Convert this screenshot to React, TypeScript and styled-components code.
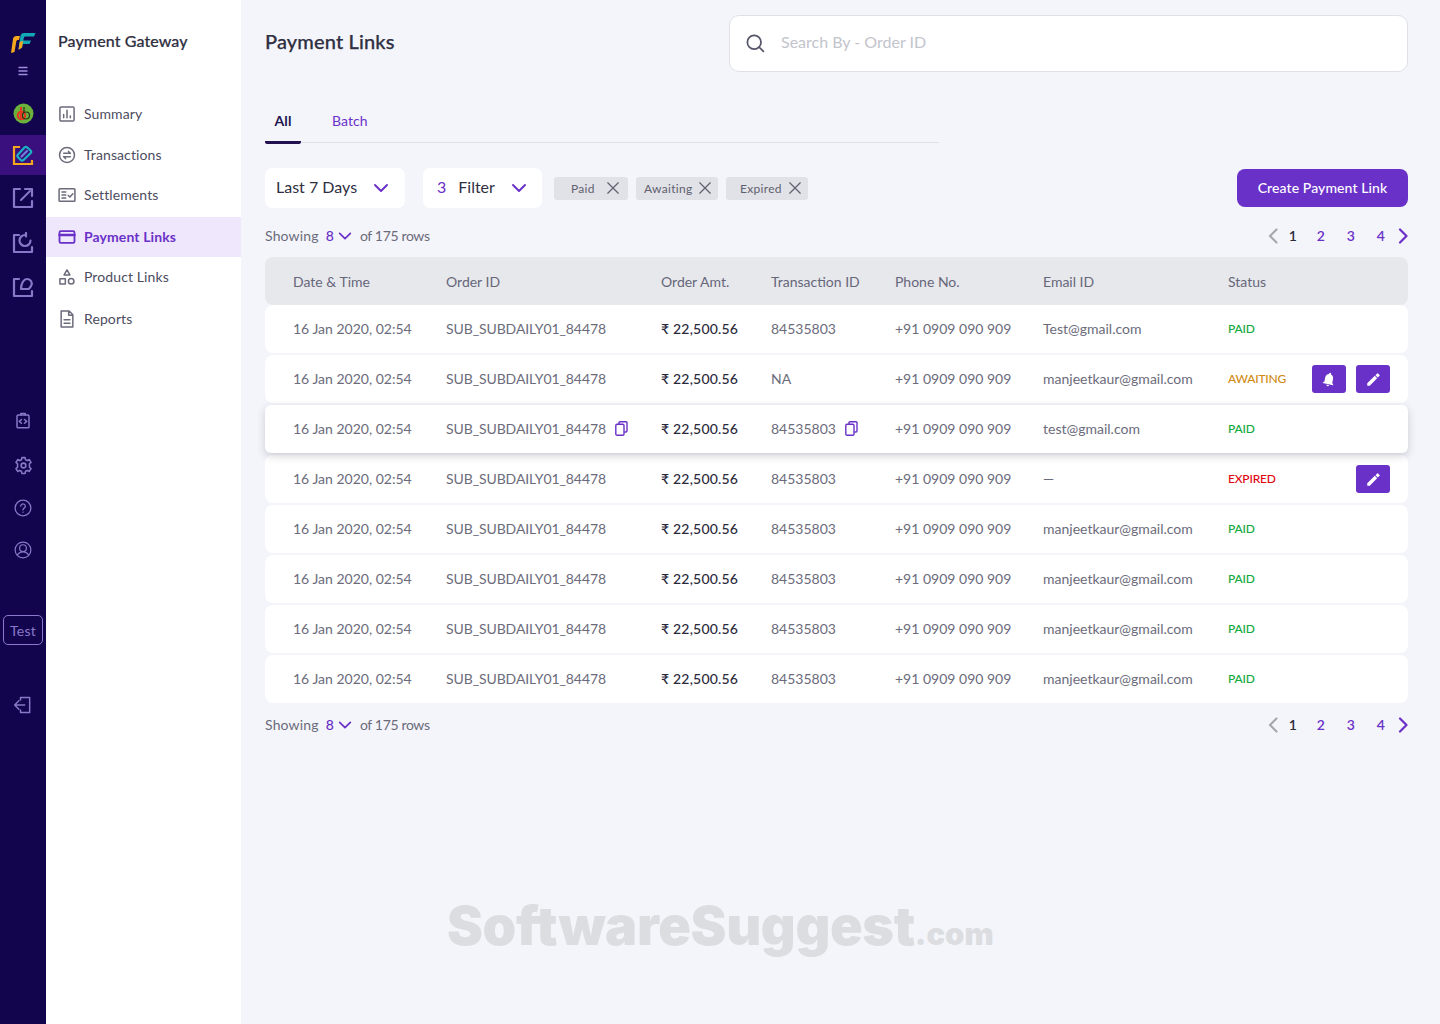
import React from "react";
import styled, { createGlobalStyle } from "styled-components";

const Global = createGlobalStyle`
  html, body { margin: 0; padding: 0; background: #f4f5fa; }
  body { font-family: "Lato", "Noto Sans", sans-serif; color: #2a2a3c; }
  * { box-sizing: border-box; }
`;

const Page = styled.div`display: flex; width: 1440px; height: 1024px; overflow: hidden; position: relative; background: #f4f5fa;`;
const Rail = styled.nav`width: 46px; flex: none; background: #12054d; display: flex; flex-direction: column; align-items: center;`;
const RailSlot = styled.div<{ $top?: number; $h?: number; $active?: boolean }>`
  width: 46px; height: ${p => p.$h ?? 44}px; margin-top: ${p => p.$top ?? 0}px; flex: none;
  display: flex; align-items: center; justify-content: center;
  background: ${p => (p.$active ? "#3a0f7e" : "transparent")};
`;
const TestBadge = styled.div`
  width: 40px; height: 30px; margin-top: 44px; border: 1px solid #8b78cc; border-radius: 5px;
  display: flex; align-items: center; justify-content: center; color: #8b78cc; font-size: 14px; letter-spacing: .2px;
`;
const Side = styled.aside`width: 195px; flex: none; background: #fff; padding-top: 30px;`;
const Brand = styled.div`font-size: 16px; font-weight: 500; padding-left: 12px; height: 22px; line-height: 22px; color: #2f2f42; letter-spacing: .1px; -webkit-text-stroke: .2px #2f2f42;`;
const SideList = styled.div`margin-top: 42px; display: flex; flex-direction: column;`;
const SideItem = styled.div<{ $active?: boolean; $top?: number }>`
  height: 40px; margin-top: ${p => p.$top ?? 0}px; display: flex; align-items: center; gap: 7px; padding-left: 11px;
  font-size: 14px; letter-spacing: .1px;
  background: ${p => (p.$active ? "#efe7fb" : "transparent")};
  color: ${p => (p.$active ? "#6a31c9" : "#4d4d5f")};
  font-weight: ${p => (p.$active ? 700 : 400)};
`;
const SideLabel = styled.span`padding-bottom: 2px;`;
const Main = styled.main`flex: 1; min-width: 0; padding: 14px 32px 0 24px; position: relative;`;
const Top = styled.header`display: flex; justify-content: space-between; align-items: center; height: 58px;`;
const Title = styled.h1`margin: 0 0 5px; font-size: 20px; line-height: 24px; font-weight: 500; color: #2f2f42; letter-spacing: .15px; -webkit-text-stroke: .25px #2f2f42;`;
const Search = styled.div`
  width: 679px; height: 57px; background: #fff; border: 1px solid #e0e1e7; border-radius: 10px;
  display: flex; align-items: center; padding-left: 15px; gap: 15px; color: #c3c4cc; font-size: 16px; letter-spacing: 0;
`;
const SearchHint = styled.span`margin-bottom: 3px;`;
const Tabs = styled.div`width: 674px; height: 58px; margin-top: 13px; border-bottom: 1px solid #dfe0e6; display: flex; align-items: flex-start;`;
const Tab = styled.div<{ $active?: boolean }>`
  width: ${p => (p.$active ? "36px" : "auto")}; margin-left: ${p => (p.$active ? 0 : 31)}px; height: 59px; padding-top: 26px; line-height: 20px; font-size: 14px; text-align: center; letter-spacing: .1px;
  color: ${p => (p.$active ? "#22164f" : "#6a31c9")}; font-weight: ${p => (p.$active ? 700 : 400)};
  border-bottom: ${p => (p.$active ? "3px solid #22104f" : "none")}; border-radius: 0 0 2px 2px;
`;
const Controls = styled.div`display: flex; align-items: center; height: 40px; margin-top: 25px;`;
const Select = styled.div<{ $w: number; $ml?: number }>`
  width: ${p => p.$w}px; height: 40px; margin-left: ${p => p.$ml ?? 0}px; background: #fff; border-radius: 7px; flex: none;
  display: flex; align-items: center; padding-left: 11px; font-size: 16px; color: #2f2f42; letter-spacing: 0;
`;
const SelectText = styled.span`padding-bottom: 3px;`;
const Purple = styled.span`color: #6a31c9;`;
const Count = styled(Purple)`margin: 0 12px 3px 3px;`;
const Chev = styled.span<{ $ml: number }>`margin-left: ${p => p.$ml}px; display: inline-flex;`;
const Tags = styled.div`display: flex; gap: 8px; margin-left: 12px;`;
const Tag = styled.div<{ $w: number; $pl: number; $pr: number }>`
  width: ${p => p.$w}px; height: 23px; background: #e1e2e7; border-radius: 3px; display: flex; align-items: center; justify-content: space-between;
  padding: 0 ${p => p.$pr}px 0 ${p => p.$pl}px;
  font-size: 12px; color: #5f5f6e; letter-spacing: .3px;
`;
const CreateBtn = styled.button`
  margin-left: auto; width: 171px; height: 38px; border: 0; padding: 0 0 2px; border-radius: 8px; background: #6a31c9; color: #fff;
  font: 500 14px "Lato", sans-serif; letter-spacing: .1px;
`;
const Meta = styled.div<{ $top: number }>`display: flex; align-items: center; height: 20px; margin-top: ${p => p.$top}px; font-size: 14px; color: #6b6b7b; letter-spacing: .15px;`;
const MetaNum = styled(Purple)`margin-left: 7px; margin-right: 3px; font-weight: 500;`;
const MetaChev = styled.span`display: inline-flex; margin-top: 2px;`;
const MetaAfter = styled.span`margin-left: 7px; letter-spacing: -.35px;`;
const Pager = styled.div`margin-left: auto; display: flex; align-items: center;`;
const PagerArrow = styled.span`display: inline-flex; margin-top: 2px;`;
const PageNum = styled.span<{ $cur?: boolean; $w?: number }>`
  width: ${p => p.$w ?? 30}px; text-align: center; font-size: 14px; font-weight: 600; color: ${p => (p.$cur ? "#2a2a3c" : "#6a31c9")};
`;
const Table = styled.div`margin-top: 12px; width: 1143px;`;
const Grid = styled.div`
  display: grid; grid-template-columns: 153px 215px 110px 124px 148px 185px 1fr; align-items: center; padding-left: 28px;
`;
const Head = styled(Grid)`height: 48px; background: #e6e8ec; border-radius: 8px; font-size: 14px; color: #66667a; letter-spacing: 0;`;
const Row = styled(Grid)<{ $lift?: boolean }>`
  height: 48px; margin-bottom: 2px; background: #fff; border-radius: ${p => (p.$lift ? 6 : 8)}px; font-size: 14px; color: #6b6b7b; letter-spacing: 0; position: relative;
  box-shadow: ${p => (p.$lift ? "0 3px 9px rgba(40,40,70,.2)" : "none")};
  z-index: ${p => (p.$lift ? 1 : 0)};
`;
const Cell = styled.div`display: flex; align-items: center; white-space: nowrap; padding-bottom: 2px;`;
const OrderCell = styled(Cell)`letter-spacing: -.1px;`;
const Amount = styled(Cell)`color: #2a2a3c; font-weight: 500; letter-spacing: .2px;`;
const CopyWrap = styled.span`display: inline-flex; margin-left: 9px;`;
const StatusCell = styled.div`display: flex; align-items: center; justify-content: space-between; padding-right: 18px; height: 32px; white-space: nowrap;`;
const Status = styled.span<{ $c: string }>`color: ${p => p.$c}; font-size: 12px; font-weight: 500; letter-spacing: -.2px; padding-bottom: 2px;`;
const Actions = styled.div`display: flex; gap: 10px; margin-left: auto;`;
const IconBtn = styled.div`width: 34px; height: 28px; border-radius: 3px; background: #6a31c9; display: flex; align-items: center; justify-content: center;`;
const Watermark = styled.div`
  position: absolute; left: 447px; top: 893px; color: #dcdde1; font: 900 54px/66px "Inter", sans-serif; letter-spacing: -.4px; white-space: nowrap;
`;
const WatermarkTld = styled.span`font-size: 31px; letter-spacing: 0;`;

type SP = { s?: number; c?: string };
const Line = ({ s = 20, c = "#75758a", children, w = 1.5, vb = 24 }: SP & { children: React.ReactNode; w?: number; vb?: number }) => (
  <svg width={s} height={s} viewBox={`0 0 ${vb} ${vb}`} fill="none" stroke={c} strokeWidth={w} strokeLinecap="round" strokeLinejoin="round">{children}</svg>
);
const Down = ({ s = 18, c = "#6a31c9", w = 2.6 }: SP & { w?: number }) => <Line s={s} c={c} w={w}><path d="M4 8l8 8 8-8" /></Line>;
const Close = () => <Line s={14} c="#5f5f6e" w={2}><path d="M3 3l18 18M21 3L3 21" /></Line>;
const Copy = () => (
  <svg width="13" height="15" viewBox="0 0 13 15" fill="none" stroke="#6a31c9" strokeWidth="1.4" strokeLinejoin="round">
    <rect x=".8" y="3.300" width="8.200" height="10.900" rx="1.200" />
    <path d="M4 3V1.800A1 1 0 0 1 5 .8h6a1 1 0 0 1 1 1V10a1 1 0 0 1-1 1H9.200" />
  </svg>
);
const Pencil = () => <svg width="15" height="15" viewBox="0 0 24 24" fill="#fff"><path d="M2 18v4h4L17.810 9.940l-3.750-3.750L2 18zM21.710 6.040a1 1 0 0 0 0-1.410l-2.340-2.340a1 1 0 0 0-1.410 0l-2.830 2.830 3.750 3.750 2.830-2.830z" /></svg>;
const Bell = () => <svg width="16" height="16" viewBox="0 0 24 24" fill="#fff"><g transform="rotate(12 12 12)"><path d="M12 23c1.100 0 2-.9 2-2h-4c0 1.100.9 2 2 2zm6-6v-6c0-3.070-1.630-5.640-4.500-6.320V4c0-.83-.67-1.500-1.500-1.500s-1.500.67-1.500 1.500v.68C7.640 5.360 6 7.920 6 11v6l-2 2v1h16v-1l-2-2z" /></g></svg>;

const RC = "#8878c8";
const Frame = ({ children }: { children: React.ReactNode }) => (
  <svg width="22" height="22" viewBox="0 0 22 22" fill="none" stroke={RC} strokeWidth="2.200" strokeLinecap="round" strokeLinejoin="round">
    {children}
  </svg>
);

const Logo = () => (
  <svg width="26" height="22" viewBox="0 0 26 22">
    <path d="M1 21 L3 7 Q3.500 4 6.500 4 H10 L9 8 H7.500 Q6.500 8 6.300 9.500 L4.500 20 Z" fill="#f5a81c" />
    <path d="M8.500 17 L10.500 4 Q11 1 14 1 H25.500 L24 4.500 H15 Q14 4.500 13.800 6 L13.400 8.500 H21 L19.500 12 H12.800 L12 16 Z" fill="#12a9b5" />
    <path d="M8.500 18 L9.700 10 L13 9 L12 15.500 Z" fill="#f5a81c" />
  </svg>
);

const rows = [
  { email: "Test@gmail.com", st: "PAID" },
  { email: "manjeetkaur@gmail.com", tx: "NA", st: "AWAITING", bell: true, edit: true },
  { email: "test@gmail.com", st: "PAID", lift: true },
  { email: "—", st: "EXPIRED", edit: true },
  { email: "manjeetkaur@gmail.com", st: "PAID" },
  { email: "manjeetkaur@gmail.com", st: "PAID" },
  { email: "manjeetkaur@gmail.com", st: "PAID" },
  { email: "manjeetkaur@gmail.com", st: "PAID" },
];
const colors: Record<string, string> = { PAID: "#12a83e", AWAITING: "#d08a12", EXPIRED: "#e0060f" };

const SI = ({ children }: { children: React.ReactNode }) => <Line s={20} c="#6b6b7b" w={1.8}>{children}</Line>;

const PagerLeft = () => (
  <svg width="12" height="16" viewBox="0 0 12 16" fill="none" stroke="#a7a7b0" strokeWidth="2.200" strokeLinecap="round" strokeLinejoin="round"><path d="M8.500 1.500L2 8l6.500 6.500" /></svg>
);
const PagerRight = () => (
  <svg width="12" height="16" viewBox="0 0 12 16" fill="none" stroke="#6a31c9" strokeWidth="2.200" strokeLinecap="round" strokeLinejoin="round"><path d="M4 1.500L10.500 8 4 14.500" /></svg>
);

const Pagination = () => (
  <Pager>
    <PagerArrow><PagerLeft /></PagerArrow>
    <PageNum $cur $w={26}>1</PageNum>
    <PageNum>2</PageNum>
    <PageNum>3</PageNum>
    <PageNum>4</PageNum>
    <PagerArrow><PagerRight /></PagerArrow>
  </Pager>
);
const Showing = ({ top }: { top: number }) => (
  <Meta $top={top}>
    Showing<MetaNum>8</MetaNum><MetaChev><Down s={16} /></MetaChev><MetaAfter>of 175 rows</MetaAfter>
    <Pagination />
  </Meta>
);

export default function App() {
  return (
    <Page>
      <Global />
      <Rail>
        <RailSlot $top={32} $h={22}><Logo /></RailSlot>
        <RailSlot $top={9} $h={16}>
          <Line s={12} c="#9d8be0" w={1.4} vb={12}><path d="M2 2.500h8M2 6h8M2 9.500h8" /></Line>
        </RailSlot>
        <RailSlot $top={23} $h={22}>
          <svg width="21" height="21" viewBox="0 0 21 21">
            <circle cx="10.500" cy="10.500" r="10" fill="#6ab23c" />
            <path d="M8 4v12" stroke="#e23a22" strokeWidth="2.200" />
            <circle cx="8.500" cy="12.500" r="3.700" fill="none" stroke="#e23a22" strokeWidth="2.200" />
            <circle cx="13" cy="12.500" r="3.500" fill="none" stroke="#27301a" strokeWidth="1.200" />
            <path d="M11 4v6" stroke="#27301a" strokeWidth="1.200" />
          </svg>
        </RailSlot>
        <RailSlot $top={11} $h={40} $active>
          <svg width="22" height="22" viewBox="0 0 22 22" fill="none" strokeLinecap="round" strokeLinejoin="round">
            <path d="M8 3H2v17h18v-4" stroke="#f5a81c" strokeWidth="2.200" strokeLinejoin="miter" strokeLinecap="butt" />
            <path d="M6 10.500L12.500 3.500a2 2 0 0 1 2.800 0l3.200 3a2 2 0 0 1 0 2.800L11.500 16a2 2 0 0 1-2.800 0L6 13.300a2 2 0 0 1 0-2.800z" stroke="#19b3c4" strokeWidth="2.200" />
            <path d="M9.500 12.500l5.500-5.500" stroke="#6f7fd8" strokeWidth="2.200" />
          </svg>
        </RailSlot>
        <RailSlot $top={1}>
          <Frame><path d="M8 2H2v18h18v-6" /><path d="M13 2h7v7" /><path d="M9 13l9-9" strokeWidth="2" /></Frame>
        </RailSlot>
        <RailSlot $top={1}>
          <Frame><path d="M7 3H2v17h18v-5" /><path d="M18.500 8.500a5.500 5.500 0 1 1-5.500-5.500" /><path d="M14 1v3.500" /></Frame>
        </RailSlot>
        <RailSlot>
          <Frame><path d="M7 3H2v17h18v-5" /><path d="M9 13c0-6 3-10 6-10a4.500 4.500 0 0 1 4 7c-1 2-1.500 3-3 3z" /></Frame>
        </RailSlot>
        <RailSlot $top={90}>
          <Line s={18} c={RC} w={2}><rect x="4" y="4" width="16" height="17" rx="1.500" /><path d="M9 4V2h6v2M10 10l-3 2.500 3 2.500M14 10l3 2.500-3 2.500" /></Line>
        </RailSlot>
        <RailSlot>
          <Line s={19} c={RC} w={2}><circle cx="12" cy="12" r="3" /><path d="M10 2h4l.6 2.800 2.200 1 2.500-1.300 2.200 3.500-2 1.800v4.400l2 1.800-2.200 3.500-2.500-1.300-2.200 1L14 22h-4l-.6-2.800-2.200-1-2.500 1.300-2.200-3.500 2-1.800V9.800l-2-1.800 2.200-3.500 2.500 1.300 2.200-1z" /></Line>
        </RailSlot>
        <RailSlot $h={42}>
          <Line s={18} c={RC} w={1.7}><circle cx="12" cy="12" r="10.500" /><path d="M9 9.500a3 3 0 1 1 4.500 2.600c-1 .6-1.500 1.200-1.500 2.400M12 17.500v.3" /></Line>
        </RailSlot>
        <RailSlot $h={42}>
          <Line s={18} c={RC} w={1.6}><circle cx="12" cy="12" r="10.500" /><circle cx="12" cy="9.500" r="4.500" /><path d="M4.500 19c1.500-3 4-4.500 7.500-4.500s6 1.500 7.500 4.500" /></Line>
        </RailSlot>
        <TestBadge>Test</TestBadge>
        <RailSlot $top={38} $h={44}>
          <Line s={20} c={RC} w={1.8}><path d="M9 6V3h11v18H9v-3M14 12H3M7 7l-5 5 5 5" /></Line>
        </RailSlot>
      </Rail>
      <Side>
        <Brand>Payment Gateway</Brand>
        <SideList>
          <SideItem>
            <SI><rect x="3.500" y="3.500" width="17" height="17" rx="1.500" /><path d="M8 16.500v-4M12 16.500v-9M16 16.500v-2" /></SI><SideLabel>Summary</SideLabel>
          </SideItem>
          <SideItem $top={1}>
            <SI><circle cx="12" cy="12" r="9" /><path d="M8 14h8M8 14l2.200 2.300M16 10H8M16 10l-2.200-2.300" /></SI><SideLabel>Transactions</SideLabel>
          </SideItem>
          <SideItem>
            <SI><rect x="2.500" y="4.500" width="19" height="15" rx="1" /><path d="M6 8.500h4.500M6 12h4.500M6 15.500h4.500M13.500 12.500l2 2 3.500-4" /></SI><SideLabel>Settlements</SideLabel>
          </SideItem>
          <SideItem $active $top={2}>
            <Line s={20} c="#6a31c9" w={2.2}><rect x="3" y="5" width="18" height="14" rx="1.500" /><path d="M3 9.500h18" strokeWidth="3" /></Line><SideLabel>Payment Links</SideLabel>
          </SideItem>
          <SideItem>
            <SI><path d="M12 3.500l3.500 6h-7zM3.500 14h6.500v6.500H3.500z" /><circle cx="17" cy="17.200" r="3.300" /></SI><SideLabel>Product Links</SideLabel>
          </SideItem>
          <SideItem $top={2}>
            <SI><path d="M5 2.500h9.500l4.500 4.500v14.500H5zM14 2.500v5h5M8.500 13h7M8.500 17h7" /></SI><SideLabel>Reports</SideLabel>
          </SideItem>
        </SideList>
      </Side>
      <Main>
        <Top>
          <Title>Payment Links</Title>
          <Search>
            <Line s={21} c="#55556a" w={2}><circle cx="10.500" cy="10.500" r="7.800" /><path d="M16 16l5 5" /></Line>
            <SearchHint>Search By - Order ID</SearchHint>
          </Search>
        </Top>
        <Tabs>
          <Tab $active>All</Tab>
          <Tab>Batch</Tab>
        </Tabs>
        <Controls>
          <Select $w={140}><SelectText>Last 7 Days</SelectText><Chev $ml={15}><Down /></Chev></Select>
          <Select $w={119} $ml={18}><Count>3</Count><SelectText>Filter</SelectText><Chev $ml={15}><Down /></Chev></Select>
          <Tags>
            <Tag $w={74} $pl={17} $pr={8}>Paid<Close /></Tag>
            <Tag $w={82} $pl={8} $pr={6}>Awaiting<Close /></Tag>
            <Tag $w={82} $pl={14} $pr={6}>Expired<Close /></Tag>
          </Tags>
          <CreateBtn>Create Payment Link</CreateBtn>
        </Controls>
        <Showing top={17} />
        <Table>
          <Head>
            <div>Date &amp; Time</div><div>Order ID</div><div>Order Amt.</div><div>Transaction ID</div><div>Phone No.</div><div>Email ID</div><div>Status</div>
          </Head>
          {rows.map((r, i) => (
            <Row key={i} $lift={r.lift}>
              <Cell>16 Jan 2020, 02:54</Cell>
              <OrderCell>SUB_SUBDAILY01_84478{r.lift && <CopyWrap><Copy /></CopyWrap>}</OrderCell>
              <Amount>₹ 22,500.56</Amount>
              <Cell>{r.tx ?? "84535803"}{r.lift && <CopyWrap><Copy /></CopyWrap>}</Cell>
              <Cell>+91 0909 090 909</Cell>
              <Cell>{r.email}</Cell>
              <StatusCell>
                <Status $c={colors[r.st]}>{r.st}</Status>
                {(r.bell || r.edit) && (
                  <Actions>
                    {r.bell && <IconBtn><Bell /></IconBtn>}
                    {r.edit && <IconBtn><Pencil /></IconBtn>}
                  </Actions>
                )}
              </StatusCell>
            </Row>
          ))}
        </Table>
        <Showing top={11} />
      </Main>
      <Watermark>SoftwareSuggest<WatermarkTld>.com</WatermarkTld></Watermark>
    </Page>
  );
}
